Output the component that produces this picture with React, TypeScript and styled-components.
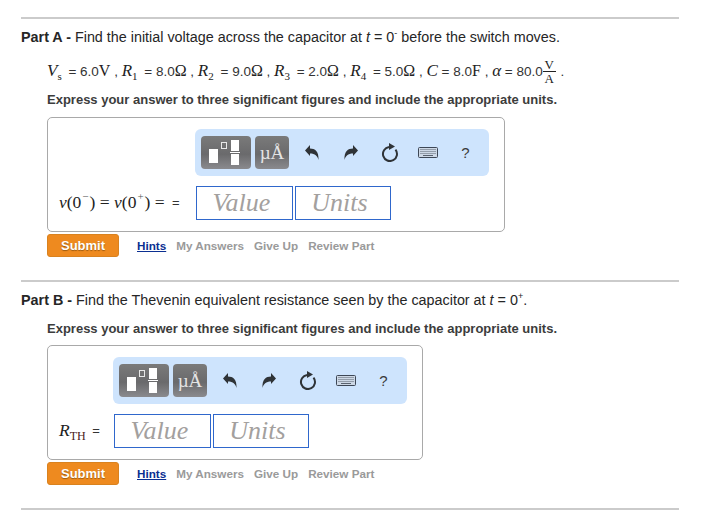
import React from "react";
import styled, { createGlobalStyle } from "styled-components";

const GlobalStyle = createGlobalStyle`
  html, body {
    margin: 0;
    padding: 0;
    background: #fff;
    font-family: "Liberation Sans", Arial, sans-serif;
    color: #222;
  }
`;

const Page = styled.div`
  width: 658px;
  margin-left: 21px;
  padding-top: 17px;
`;

const Rule = styled.hr`
  margin: 0;
  border: 0;
  height: 2px;
  background: #cbcbcb;
`;

const Part = styled.section<{ $height: number }>`
  height: ${(p) => p.$height}px;
  display: flex;
  flex-direction: column;
`;

const Title = styled.p<{ $top: number }>`
  margin: ${(p) => p.$top}px 0 0;
  font-size: 14.35px;
  line-height: 16px;
  color: #262626;
  strong {
    font-weight: 700;
  }
  i {
    font-style: italic;
  }
  sup {
    font-size: 9px;
    line-height: 0;
  }
`;

const Givens = styled.div`
  margin: 14px 0 0 26px;
  height: 24px;
  display: flex;
  align-items: center;
  font-size: 13.5px;
  color: #333;
  white-space: pre;
`;

const MathVar = styled.span<{ $bare?: boolean }>`
  font-family: "Liberation Serif", serif;
  font-style: italic;
  font-size: 17px;
  margin-right: ${(p) => (p.$bare ? 0 : 3)}px;
  color: #222;
  sub {
    font-style: normal;
    font-size: 11px;
    line-height: 0;
  }
`;

const MathUnit = styled.span`
  font-family: "Liberation Serif", serif;
  font-size: 16px;
  color: #222;
`;

const Fraction = styled.span`
  display: inline-flex;
  flex-direction: column;
  align-items: center;
  width: 13px;
  margin-right: 1px;
  font-family: "Liberation Serif", serif;
  font-size: 13px;
  font-weight: 400;
  line-height: 13px;
  color: #222;
  span {
    width: 100%;
    text-align: center;
  }
  span + span {
    border-top: 1px solid #222;
  }
`;

const Instruction = styled.p<{ $top: number }>`
  margin: ${(p) => p.$top}px 0 0 26px;
  font-size: 13px;
  line-height: 14px;
  font-weight: 700;
  color: #3c3c3c;
`;

const AnswerBox = styled.div<{ $labelWidth: number; $top: number }>`
  box-sizing: border-box;
  margin: ${(p) => p.$top}px 0 0 26px;
  width: ${(p) => p.$labelWidth + 310}px;
  height: 115px;
  flex-shrink: 0;
  border: 1px solid #a9a9a9;
  border-radius: 5px;
  padding: 11px 0 0 ${(p) => p.$labelWidth - 1}px;
  position: relative;
  display: grid;
  grid-template-columns: 294px;
  grid-template-rows: 47px 34px;
  row-gap: 10px;
`;

const Toolbar = styled.div`
  background: #cee4fd;
  border-radius: 6px;
  display: flex;
  align-items: center;
  padding-left: 6px;
`;

const ToolGroup = styled.button<{ $width: number; $gap: number }>`
  width: ${(p) => p.$width}px;
  height: 33px;
  border: 0;
  padding: 0;
  margin-right: ${(p) => p.$gap}px;
  border-radius: 4px;
  background: linear-gradient(#7a7a7a, #6a6a6c 55%, #8a8a8e);
  display: flex;
  align-items: center;
  justify-content: center;
`;

const MicroLabel = styled.span`
  font-family: "Liberation Serif", serif;
  font-size: 19px;
  color: #e4e4e4;
`;

const ToolIcon = styled.span<{ $width: number }>`
  width: ${(p) => p.$width}px;
  display: flex;
  justify-content: center;
  align-items: center;
`;

const Help = styled.span`
  font-size: 15px;
  color: #3a3a3a;
`;

const Inputs = styled.div`
  display: flex;
  gap: 2px;
  margin-left: 1px;
`;

const ValueInput = styled.div`
  box-sizing: border-box;
  height: 34px;
  width: 97px;
  border: 1px solid #2f67cc;
  background: #fff;
  font-family: "Liberation Serif", serif;
  font-style: italic;
  font-size: 26px;
  line-height: 31px;
  text-align: center;
  padding-right: 6px;
  color: #a3a09e;
`;

const UnitsInput = styled(ValueInput)`
  width: 96px;
  padding-right: 7px;
`;

const Label = styled.div`
  position: absolute;
  left: 11px;
  bottom: 12px;
  height: 34px;
  display: flex;
  align-items: center;
  font-family: "Liberation Serif", serif;
  font-size: 17.5px;
  color: #222;
  white-space: pre;
  sup {
    font-size: 11px;
    line-height: 0;
    margin: 11px 1px 0 1px;
    color: #555;
    align-self: flex-start;
  }
  sub {
    font-size: 12px;
    line-height: 0;
    color: #4a2020;
    align-self: flex-end;
    margin-bottom: 11px;
  }
  em {
    font-style: italic;
  }
`;

const Equals = styled.span`
  font-family: "Liberation Sans", sans-serif;
  font-size: 13px;
  color: #333;
  margin-left: 3px;
`;

const ActionRow = styled.div`
  display: flex;
  align-items: center;
  margin: 2px 0 0 26px;
  height: 23px;
`;

const SubmitButton = styled.button`
  width: 72px;
  height: 23px;
  padding: 0;
  border: 1px solid #d9821f;
  border-radius: 3px;
  background: #ee8a1f;
  color: #fff;
  font-family: "Liberation Sans", sans-serif;
  font-size: 13px;
  font-weight: 700;
  text-shadow: 0 1px 1px #9a5a10;
  margin-right: 18px;
`;

const ActionLink = styled.a<{ $active?: boolean }>`
  font-size: 11.7px;
  font-weight: 700;
  margin-right: 10px;
  color: ${(p) => (p.$active ? "#0b2f91" : "#9a9a9a")};
  text-decoration: ${(p) => (p.$active ? "underline" : "none")};
`;

const FractionIcon = () => (
  <svg width="34" height="26" viewBox="0 0 34 26">
    <rect x="0" y="9" width="9" height="14" fill="#fff" />
    <rect x="12.5" y="2.5" width="5" height="6" fill="none" stroke="#e8e8e8" />
    <rect x="22" y="0" width="8" height="11" fill="#fff" />
    <rect x="21" y="12" width="10" height="1" fill="#fff" />
    <rect x="22" y="14" width="8" height="11" fill="#fff" />
  </svg>
);

const UndoIcon = ({ flip }: { flip?: boolean }) => (
  <svg width="14" height="15" viewBox="0 0 14 15" style={flip ? { transform: "scaleX(-1)" } : undefined}>
    <path d="M0 5.5 L5 0 V3.5 C10 3.5 14 6 13.5 15 C12.5 11 10 8.5 5 8.5 V11 Z" fill="#2f3337" />
  </svg>
);

const ResetIcon = () => (
  <svg width="18" height="19" viewBox="0 0 18 19">
    <path d="M14.5 6.7 A7 7 0 1 1 8 4.07" fill="none" stroke="#2f3337" strokeWidth="2" />
    <path d="M8 0 L14 3.5 L8 7 Z" fill="#2f3337" />
  </svg>
);

const KeyboardIcon = () => (
  <svg width="20" height="11" viewBox="0 0 20 11">
    <rect x="0.5" y="0.5" width="19" height="10" rx="1" fill="#cdd8e6" stroke="#3d4756" />
    <path d="M2.5 2.5 H17.5 M2.5 4.5 H17.5 M2.5 6.5 H17.5" stroke="#59626f" strokeWidth="1" strokeDasharray="1 1" />
    <path d="M5 8.5 H15" stroke="#59626f" strokeWidth="1" />
  </svg>
);

const EditorToolbar = () => (
  <Toolbar>
    <ToolGroup $width={50} $gap={4}>
      <FractionIcon />
    </ToolGroup>
    <ToolGroup $width={34} $gap={5}>
      <MicroLabel>µÅ</MicroLabel>
    </ToolGroup>
    <ToolIcon $width={36}>
      <UndoIcon />
    </ToolIcon>
    <ToolIcon $width={41}>
      <UndoIcon flip />
    </ToolIcon>
    <ToolIcon $width={37}>
      <ResetIcon />
    </ToolIcon>
    <ToolIcon $width={40}>
      <KeyboardIcon />
    </ToolIcon>
    <ToolIcon $width={35}>
      <Help>?</Help>
    </ToolIcon>
  </Toolbar>
);

const Actions = () => (
  <ActionRow>
    <SubmitButton>Submit</SubmitButton>
    <ActionLink $active>Hints</ActionLink>
    <ActionLink>My Answers</ActionLink>
    <ActionLink>Give Up</ActionLink>
    <ActionLink>Review Part</ActionLink>
  </ActionRow>
);

const Answer = ({ labelWidth, top, label }: { labelWidth: number; top: number; label: React.ReactNode }) => (
  <AnswerBox $labelWidth={labelWidth} $top={top}>
    <EditorToolbar />
    <Inputs>
      <ValueInput>Value</ValueInput>
      <UnitsInput>Units</UnitsInput>
    </Inputs>
    <Label>{label}</Label>
  </AnswerBox>
);

const instruction = "Express your answer to three significant figures and include the appropriate units.";

export default function App() {
  return (
    <Page>
      <GlobalStyle />
      <Rule />
      <Part $height={261}>
        <Title $top={10}>
          <strong>Part A - </strong>Find the initial voltage across the capacitor at <i>t</i> = 0<sup>-</sup> before the switch moves.
        </Title>
        <Givens>
          <MathVar>
            V<sub>s</sub>
          </MathVar>
          {" = 6.0"}
          <MathUnit>V</MathUnit>
          {" , "}
          <MathVar>
            R<sub>1</sub>
          </MathVar>
          {" = 8.0"}
          <MathUnit>Ω</MathUnit>
          {" , "}
          <MathVar>
            R<sub>2</sub>
          </MathVar>
          {" = 9.0"}
          <MathUnit>Ω</MathUnit>
          {" , "}
          <MathVar>
            R<sub>3</sub>
          </MathVar>
          {" = 2.0"}
          <MathUnit>Ω</MathUnit>
          {" , "}
          <MathVar>
            R<sub>4</sub>
          </MathVar>
          {" = 5.0"}
          <MathUnit>Ω</MathUnit>
          {" , "}
          <MathVar $bare>C</MathVar>
          {" = 8.0"}
          <MathUnit>F</MathUnit>
          {" , "}
          <MathVar $bare>α</MathVar>
          {" = 80.0"}
          <Fraction>
            <span>V</span>
            <span>A</span>
          </Fraction>
          {" ."}
        </Givens>
        <Instruction $top={10}>{instruction}</Instruction>
        <Answer
          labelWidth={148}
          top={10}
          label={
            <>
              <em>v</em>(0<sup>−</sup>) = <em>v</em>(0<sup>+</sup>) = <Equals>=</Equals>
            </>
          }
        />
        <Actions />
      </Part>
      <Rule />
      <Part $height={226}>
        <Title $top={10}>
          <strong>Part B - </strong>Find the Thevenin equivalent resistance seen by the capacitor at <i>t</i> = 0<sup>+</sup>.
        </Title>
        <Instruction $top={14}>{instruction}</Instruction>
        <Answer
          labelWidth={66}
          top={9}
          label={
            <>
              <em>R</em>
              <sub>TH</sub>
              <Equals> =</Equals>
            </>
          }
        />
        <Actions />
      </Part>
      <Rule />
    </Page>
  );
}
